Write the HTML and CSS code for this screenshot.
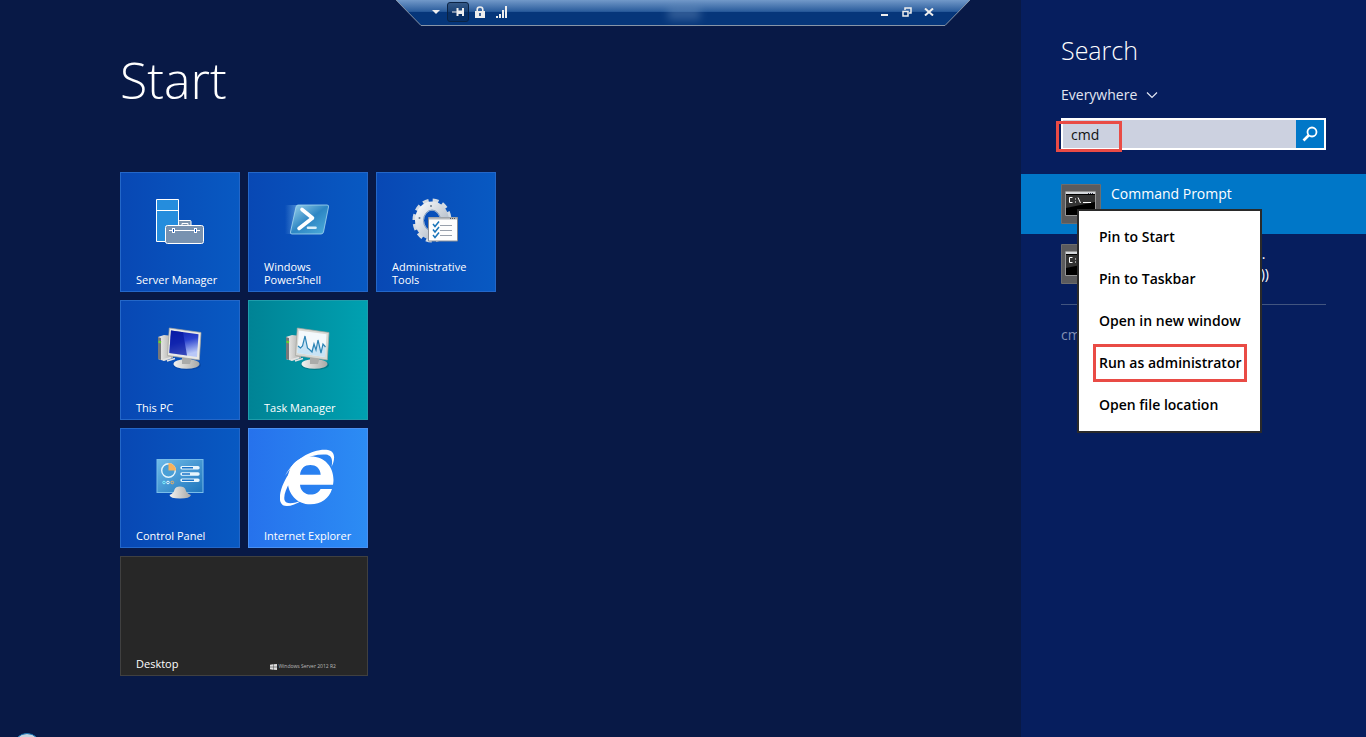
FILE: index.html
```
<!DOCTYPE html>
<html lang="en">
<head>
    <meta charset="UTF-8">
    <title>Start</title>
    <link rel="stylesheet" href="styles.css">
</head>
<body>
<div class="page">
    <!-- remote connection bar -->
    <div class="rdp-bar">
        <svg class="rdp-shape" viewBox="0 0 574 27" aria-hidden="true">
            <defs>
                <linearGradient id="barGrad" x1="0" y1="0" x2="0" y2="1">
                    <stop offset="0" stop-color="#7299c9"/>
                    <stop offset="0.45" stop-color="#2a5c9c"/>
                    <stop offset="0.46" stop-color="#06367a"/>
                    <stop offset="1" stop-color="#06367a"/>
                </linearGradient>
            </defs>
            <path d="M0 0H574L549 25.5H25Z" fill="url(#barGrad)"/>
            <path d="M0 0L25 25.5H549L574 0" fill="none" stroke="#8795a8"/>
        </svg>
        <div class="rdp-group">
            <button class="rdp-btn" aria-label="Menu"><svg width="10" height="6" viewBox="0 0 10 6"><path d="M1 1H9L5 5Z" fill="#eee"/></svg></button>
            <button class="rdp-btn pinned" aria-label="Pin"><svg width="14" height="12" viewBox="0 0 14 12"><path d="M1 6H6" stroke="#eee"/><path d="M6.500 2V10M12 2V10" stroke="#eee" stroke-width="2" fill="none"/><path d="M7 4.500H12V8H7Z" fill="#eee"/></svg></button>
            <button class="rdp-btn" aria-label="Security"><svg width="10" height="12" viewBox="0 0 10 12"><path d="M2.200 6V3.500Q2.200 1 5 1T7.800 3.500V6" stroke="#eee" stroke-width="1.600" fill="none"/><path d="M0 5H10V12H0Z" fill="#eee"/><path d="M5 7V10" stroke="#06367a" stroke-width="1.500"/></svg></button>
            <button class="rdp-btn" aria-label="Signal"><svg width="12" height="12" viewBox="0 0 12 12"><path d="M0 10h2v2H0zM3 8h2v4H3zM6 4h2v8H6zM9 0h2v12H9z" fill="#eee"/></svg></button>
        </div>
        <span class="rdp-haze"></span>
        <div class="rdp-group">
            <button class="rdp-btn" aria-label="Minimize"><svg width="10" height="10" viewBox="0 0 10 10"><path d="M1 8H8" stroke="#eee" stroke-width="2"/></svg></button>
            <button class="rdp-btn" aria-label="Restore"><svg width="10" height="10" viewBox="0 0 10 10"><path d="M3 3V1H9V6H7M1 4.500H6V9H1Z" stroke="#eee" stroke-width="1.500" fill="none"/></svg></button>
            <button class="rdp-btn" aria-label="Close"><svg width="10" height="8" viewBox="0 0 10 8"><path d="M1 .500L9 7.500M9 .500L1 7.500" stroke="#eee" stroke-width="2"/></svg></button>
        </div>
    </div>

    <main class="start">
        <h1>Start</h1>
        <div class="tiles">
            <a class="tile" href="#">
                <svg class="icon" viewBox="0 0 48 48">
                    <path d="M.5 1.500H22.500V43.500H.5ZM.5 12.500H22.500" fill="#258ddd" stroke="#fff"/>
                    <path d="M22.500 27V23.500Q22.500 22.500 23.500 22.500H34Q35 22.500 35 23.500V27M26 27V25.500H32V27" fill="#7b93ad" stroke="#fff"/>
                    <rect x="9.500" y="27.500" width="38" height="18" rx="2" fill="#7892b0" stroke="#fff"/>
                    <path d="M13 32.500H44" stroke="#fff"/>
                    <rect x="16.500" y="30.500" width="2" height="4" fill="#0b51b9" stroke="#fff"/>
                    <rect x="38.500" y="30.500" width="2" height="4" fill="#0b51b9" stroke="#fff"/>
                </svg>
                <span class="label">Server Manager</span>
            </a>
            <a class="tile" href="#">
                <svg class="icon" viewBox="0 0 48 48">
                    <defs>
                        <linearGradient id="psGrad" x1="0" y1="0" x2="1" y2="1">
                            <stop offset="0" stop-color="#9ed5ec"/>
                            <stop offset="0.5" stop-color="#2d86c4"/>
                            <stop offset="1" stop-color="#4fb0dc"/>
                        </linearGradient>
                        <linearGradient id="psTrail">
                            <stop offset="0" stop-color="#7db8e6" stop-opacity="0"/>
                            <stop offset="1" stop-color="#7db8e6" stop-opacity="0.6"/>
                        </linearGradient>
                    </defs>
                    <path d="M1 7H14L8 36H1Z" fill="url(#psTrail)"/>
                    <path d="M14 7H43Q45 7 44.500 9L39.500 34Q39 36 37 36H8Q6 36 6.500 34L12 9Q12.500 7 14 7Z" fill="url(#psGrad)" stroke="#a6d8ef" stroke-width=".8"/>
                    <path d="M18 11.500L28.500 20L15 30.500" fill="none" stroke="#fff" stroke-width="3.600" stroke-linecap="round" stroke-linejoin="round"/>
                    <path d="M24 29.800H31.500" stroke="#d9effa" stroke-width="2.600" stroke-linecap="round"/>
                </svg>
                <span class="label">Windows<br>PowerShell</span>
            </a>
            <a class="tile" href="#">
                <svg class="icon" viewBox="0 0 48 48">
                    <defs>
                        <linearGradient id="gearGrad" x1="0" y1="0" x2="1" y2="1">
                            <stop offset="0" stop-color="#f4f6f8"/>
                            <stop offset="1" stop-color="#a9b4c2"/>
                        </linearGradient>
                    </defs>
                    <ellipse cx="20" cy="22.500" rx="17" ry="19.500" fill="none" stroke="#d3dae2" stroke-width="5" stroke-dasharray="5.600 3.980"/>
                    <ellipse cx="20" cy="22.500" rx="12.500" ry="14.500" fill="none" stroke="url(#gearGrad)" stroke-width="9"/>
                    <ellipse cx="20" cy="22.500" rx="8.500" ry="10.500" fill="none" stroke="#7f9cc2" stroke-width="1"/>
                    <circle cx="19" cy="8" r="1" fill="#66788c"/><circle cx="7.500" cy="20" r="1" fill="#66788c"/>
                    <path d="M16.500 19.500H45.500V43H16.500Z" fill="#fdfdfd" stroke="#8a8f96"/>
                    <path d="M17 20.500H45" stroke="#b5b8bc" stroke-width="2"/>
                    <path d="M38 20.500H44" stroke="#555" stroke-dasharray="1 1"/>
                    <path d="M28 27.500H40M28 32.500H40M28 37.500H40" stroke="#98a0ac"/>
                    <path d="M21 26L23 28.500L27 23.500M21 31.500L23 34L27 29M21 37L23 39.500L27 34.500" fill="none" stroke="#1974b9" stroke-width="1.500"/>
                </svg>
                <span class="label">Administrative<br>Tools</span>
            </a>
            <a class="tile first" href="#">
                <svg class="icon" viewBox="0 0 48 48">
                    <defs>
                        <linearGradient id="metal"><stop offset="0" stop-color="#f3f3f1"/><stop offset="1" stop-color="#a8a8a6"/></linearGradient>
                        <linearGradient id="screen" x1="0" y1="0" x2="0.300" y2="1"><stop offset="0" stop-color="#0718a8"/><stop offset="0.500" stop-color="#2b43cf"/><stop offset="1" stop-color="#b9c8f7"/></linearGradient>
                    </defs>
                    <path d="M2 11L8 9L17 10V32L8 35L2 33Z" fill="url(#metal)"/>
                    <path d="M2 11L5 12V34L2 33Z" fill="#77787a"/>
                    <path d="M2.500 15.500L5 16.500" stroke="#64d62c" stroke-width="2"/>
                    <path d="M7 34L15 31.500M11 35L19 32.500" stroke="#e3e3e3" stroke-width="1.500"/>
                    <ellipse cx="31" cy="39" rx="14" ry="5" fill="#063b91" opacity=".5"/>
                    <ellipse cx="30.500" cy="38" rx="13" ry="4.800" fill="url(#metal)"/>
                    <path d="M26 31H36L34 38H26Z" fill="#aaaba9"/>
                    <path d="M13.300 2L45 6.500L43.300 34L11.500 29.500Z" fill="#e9e9e5" stroke="#a3a39d" stroke-width=".7"/>
                    <path d="M15 4.500L42.500 8.300L41 31L13.300 27Z" fill="url(#screen)"/>
                    <path d="M15 4.500L27 6.200L31 29.600L13.300 27Z" fill="#0719a2" opacity=".72"/>
                </svg>
                <span class="label">This PC</span>
            </a>
            <a class="tile teal" href="#">
                <svg class="icon" viewBox="0 0 48 48">
                    <path d="M2 11L8 9L17 10V32L8 35L2 33Z" fill="url(#metal)"/>
                    <path d="M2 11L5 12V34L2 33Z" fill="#77787a"/>
                    <path d="M2.500 15.500L5 16.500" stroke="#64d62c" stroke-width="2"/>
                    <path d="M7 34L15 31.500M11 35L19 32.500" stroke="#e3e3e3" stroke-width="1.500"/>
                    <ellipse cx="31" cy="39" rx="14" ry="5" fill="#04606b" opacity=".5"/>
                    <ellipse cx="30.500" cy="38" rx="13" ry="4.800" fill="url(#metal)"/>
                    <path d="M26 31H36L34 38H26Z" fill="#aaaba9"/>
                    <path d="M13.300 2L45 6.500L43.300 34L11.500 29.500Z" fill="#d9dad5" stroke="#a3a39d" stroke-width=".7"/>
                    <path d="M15 4.500L42.500 8.300L41 31L13.300 27Z" fill="#f3f9fc"/>
                    <path d="M14 20L18 22L21 10L24 23L27 25L30 17L32 24L34 15L37 27L39 19L41.500 21L41 31L13.300 27Z" fill="#c8e3f4"/>
                    <path d="M14 20L16.500 22L18.500 20L21 10L23.500 22L26 24L28 26L30 18L32 24L34 14L37 27L39 18L41.500 21" fill="none" stroke="#2c84b5" stroke-width="1.200"/>
                </svg>
                <span class="label">Task Manager</span>
            </a>
            <a class="tile first" href="#">
                <svg class="icon" viewBox="0 0 48 48">
                    <defs>
                        <linearGradient id="cpGrad" x1="0" y1="0" x2="1" y2="1"><stop offset="0" stop-color="#6fbbe8"/><stop offset="1" stop-color="#1d75bd"/></linearGradient>
                    </defs>
                    <rect x="1" y="5.500" width="46" height="33" fill="url(#cpGrad)" stroke="#79bde9"/>
                    <circle cx="12.500" cy="16.500" r="6.800" fill="#4a9fd6" stroke="#e6f5fd" stroke-width="1.400"/>
                    <path d="M12.500 16.500V9A7.500 7.500 0 0 1 20 16.500Z" fill="#f8b25c"/>
                    <g stroke="#e6f5fd" stroke-width="3.400" stroke-linecap="round"><path d="M26 13.700H42M26 20H42M26 26.200H42"/></g>
                    <g stroke="#1872c8" stroke-width="1.600"><path d="M26 13.700H37M26 20H34M26 26.200H38"/></g>
                    <circle cx="8" cy="28.500" r="1.300" fill="none" stroke="#7ef0ff"/>
                    <circle cx="12" cy="28.500" r="1.300" fill="none" stroke="#e6f5fd"/>
                    <circle cx="16.300" cy="28.500" r="1.300" fill="none" stroke="#f8b25c"/>
                    <path d="M13.500 41Q18 39 18.500 35.500Q19.500 32.500 24 32.500T29.500 35.500Q30 39 35 41Q34 44.500 24 44.500T13.500 41Z" fill="url(#metal)"/>
                </svg>
                <span class="label">Control Panel</span>
            </a>
            <a class="tile bright" href="#">
                <svg class="icon-big" viewBox="0 0 56 58" fill="#fff">
                    <path fill-rule="evenodd" d="M53 35.700H20C20.500 42 25 45.500 30.500 45.500C35.500 45.500 39 43.500 40.500 40H52C49 49.500 41 55.300 30.500 55.300C17 55.300 7.700 45 7.700 31.700C7.700 17.500 17 7.500 30.500 7.500C45 7.500 53.500 18 53.500 31C53.500 33 53 35.700 53 35.700ZM20 25.700H40.700C40 19 36 16 30.300 16C24.700 16 21 19 20 25.700Z"/>
                    <path d="M5 27C14 9 35 -1 48 1C56 2.500 55 11 51.500 18C53 11 52 6.500 46 5.500C38 5 29 7 22 11C15 15 10 19 5 27Z"/>
                    <path d="M11 22C3 32 -2 46 .5 53C3 60 13 57 22 51.500C14 54.500 6 56 4.500 51C3.500 46 6 40 10 33Z"/>
                </svg>
                <span class="label">Internet Explorer</span>
            </a>
            <a class="tile desktop" href="#">
                <span class="label">Desktop</span>
                <span class="edition"><svg width="7" height="6" viewBox="0 0 7 6"><path d="M0 .7L3 .3V2.800H0ZM3.400 .2L7 0V2.800H3.400ZM0 3.200H3V5.700L0 5.300ZM3.400 3.200H7V6L3.400 5.800Z" fill="#ddd"/></svg>Windows Server 2012 R2</span>
            </a>
        </div>
        <span class="start-hint"></span>
    </main>

    <aside class="search">
        <h2>Search</h2>
        <div class="scope">
            <select aria-label="Search scope">
                <option>Everywhere</option>
            </select>
            <svg width="12" height="8" viewBox="0 0 12 8"><path d="M1 1.500L6 6.500L11 1.500" fill="none" stroke="#e2e6f2" stroke-width="1.200"/></svg>
        </div>
        <form class="search-box">
            <input type="text" value="cmd" aria-label="Search">
            <button type="button" aria-label="Search">
                <svg width="16" height="16" viewBox="0 0 16 16"><circle cx="10" cy="6" r="4.500" fill="none" stroke="#fff" stroke-width="1.800"/><path d="M6.500 9.500L1.500 14.500" stroke="#fff" stroke-width="2.600"/></svg>
            </button>
        </form>
        <ul class="results">
            <li class="result active">
                <svg class="app" viewBox="0 0 40 40">
                    <path d="M.5 .5H39.500V39.500H.5Z" fill="#5b5b5d" stroke="#6d6d6d"/>
                    <path d="M4.500 7.500H34.500V31.500H4.500Z" fill="#000" stroke="#969696"/>
                    <path d="M5 8H34V10H5Z" fill="#d4d7db"/>
                    <path d="M5 11H34V18L5 24Z" fill="#333"/>
                    <path d="M27 9.500H33" stroke="#334" stroke-dasharray="1 1"/>
                    <path d="M11.500 13.500H8.500V18.500H11.500M14.500 14.500V15.500M14.500 17.500V18.500M17 13.500L19.500 19M22 18.500H30" fill="none" stroke="#fff"/>
                </svg>
                <span class="name">Command Prompt</span>
                <div class="menu">
                    <button>Pin to Start</button>
                    <button>Pin to Taskbar</button>
                    <button>Open in new window</button>
                    <button class="marked">Run as administrator</button>
                    <button>Open file location</button>
                </div>
            </li>
            <li class="result">
                <svg class="app" viewBox="0 0 40 40">
                    <path d="M.5 .5H39.500V39.500H.5Z" fill="#5b5b5d" stroke="#6d6d6d"/>
                    <path d="M4.500 7.500H34.500V31.500H4.500Z" fill="#000" stroke="#969696"/>
                    <path d="M5 8H34V10H5Z" fill="#d4d7db"/>
                    <path d="M5 11H34V18L5 24Z" fill="#333"/>
                    <path d="M11.500 13.500H8.500V18.500H11.500M14.500 14.500V15.500M14.500 17.500V18.500M17 13.500L19.500 19M22 18.500H30" fill="none" stroke="#fff"/>
                </svg>
                <span class="name tail">.&nbsp;<br>0))</span>
            </li>
        </ul>
        <p class="suggestion">cmd</p>
    </aside>
</div>
</body>
</html>
```
FILE: styles.css
```
*, *::before, *::after {
    margin: 0;
    padding: 0;
    box-sizing: border-box;
    font-family: "Open Sans", "Noto Sans", sans-serif;
}

body {
    background: #081946;
    color: #fff;
    font-size: 14px;
}

a {
    color: #fff;
    text-decoration: none;
}

button {
    border: 0;
    background: none;
}

svg {
    display: block;
}

.page {
    position: relative;
    display: flex;
    min-height: 100vh;
    overflow: hidden;
}

/* connection bar, lies over the top edge */
.rdp-bar {
    position: absolute;
    top: 0;
    left: 50%;
    transform: translateX(-50%);
    display: flex;
    justify-content: space-between;
    width: 574px;
    height: 27px;
    padding: 0 30px 0 29px;
}

.rdp-shape {
    position: absolute;
    top: 0;
    left: 0;
    width: 100%;
}

.rdp-group {
    position: relative;
    display: flex;
    align-items: center;
    height: 23px;
}

.rdp-btn {
    display: flex;
    align-items: center;
    justify-content: center;
    width: 22px;
    height: 20px;
}

.rdp-btn.pinned {
    border: 1px solid #0b2344;
    border-radius: 3px;
    background: rgba(10, 40, 80, 0.5);
}

.rdp-haze {
    position: absolute;
    top: 6px;
    left: 272px;
    width: 32px;
    height: 14px;
    background: #6f93c0;
    opacity: 0.4;
    filter: blur(4px);
}

/* start screen */
.start {
    position: relative;
    flex: 1;
    padding: 44px 0 0 120px;
}

.start h1 {
    height: 128px;
    font-size: 50px;
    font-weight: 300;
    line-height: 72px;
}

.tiles {
    display: grid;
    grid-template-columns: repeat(3, 120px);
    grid-auto-rows: 120px;
    gap: 8px;
}

.tile {
    display: flex;
    flex-direction: column;
    border: 1px solid #2467c8;
    background: linear-gradient(90deg, #0848b4, #0859c2);
}

.tile.first {
    grid-column: 1;
}

.tile.teal {
    border-color: #1f9dab;
    background: linear-gradient(90deg, #008395, #00a1b1);
}

.tile.bright {
    border-color: #4a90f2;
    background: linear-gradient(90deg, #2672ec, #2c8cf4);
}

.tile.desktop {
    grid-column: 1 / span 2;
    flex-direction: row;
    align-items: flex-end;
    border-color: #404040;
    background: #272727;
}

.icon {
    width: 48px;
    height: 48px;
    margin: 25px auto 0;
}

.icon-big {
    width: 56px;
    height: 58px;
    margin: 20px auto 0;
}

.label {
    margin-top: auto;
    padding: 0 0 5px 15px;
    font-size: 11px;
    line-height: 13px;
}

.edition {
    display: flex;
    align-items: center;
    gap: 1px;
    margin-left: 92px;
    padding-bottom: 5px;
    color: #bbb;
    font-size: 5px;
    line-height: 7px;
    white-space: nowrap;
}

.start-hint {
    position: absolute;
    bottom: -24px;
    left: 13px;
    width: 28px;
    height: 28px;
    border: 1px solid #1674b4;
    border-radius: 50%;
    background: #c5d3df;
}

/* search pane */
.search {
    width: 345px;
    padding-top: 32px;
    background: #061e5e;
}

.search h2 {
    padding-left: 40px;
    font-size: 25px;
    font-weight: 300;
    line-height: 36px;
}

.scope {
    display: flex;
    align-items: center;
    gap: 8px;
    padding: 17px 40px 0;
    line-height: 20px;
}

.scope select {
    border: 0;
    appearance: none;
    background: none;
    color: #e2e6f2;
    font-size: 14px;
    line-height: 20px;
}

.search-box {
    position: relative;
    display: flex;
    height: 32px;
    margin: 13px 40px 24px;
    border: 2px solid #fff;
}

.search-box input {
    flex: 1;
    min-width: 0;
    padding-left: 8px;
    border: 0;
    outline: none;
    background: #ccd1e0;
    color: #111;
    font-size: 14px;
}

.search-box button {
    display: flex;
    align-items: center;
    justify-content: center;
    width: 28px;
    background: #0077c8;
}

/* red callout boxes */
.search-box::after,
.marked::after {
    content: "";
    position: absolute;
    border: 3px solid #e94b45;
    pointer-events: none;
}

.search-box::after {
    top: 1px;
    left: -7px;
    width: 66px;
    height: 31px;
}

.marked::after {
    top: 3px;
    left: 14px;
    width: 154px;
    height: 38px;
}

.results {
    list-style: none;
}

.result {
    position: relative;
    display: flex;
    gap: 10px;
    height: 60px;
    padding: 10px 40px;
}

.result.active {
    z-index: 1;
    background: #0077c8;
}

.app {
    width: 40px;
    height: 40px;
}

.name {
    line-height: 20px;
}

.name.tail {
    width: 158px;
    text-align: right;
}

.menu {
    position: absolute;
    top: 35px;
    left: 56px;
    width: 185px;
    padding: 4px 0 6px;
    border: 2px solid #2a2a2a;
    background: #fff;
}

.menu button {
    position: relative;
    display: block;
    width: 100%;
    height: 42px;
    padding-left: 20px;
    color: #000;
    font-size: 14px;
    font-weight: 600;
    text-align: left;
    white-space: nowrap;
}

.suggestion {
    margin: 10px 40px 0;
    padding-top: 20px;
    border-top: 1px solid #42557f;
    color: #8390b3;
    line-height: 20px;
}
```
